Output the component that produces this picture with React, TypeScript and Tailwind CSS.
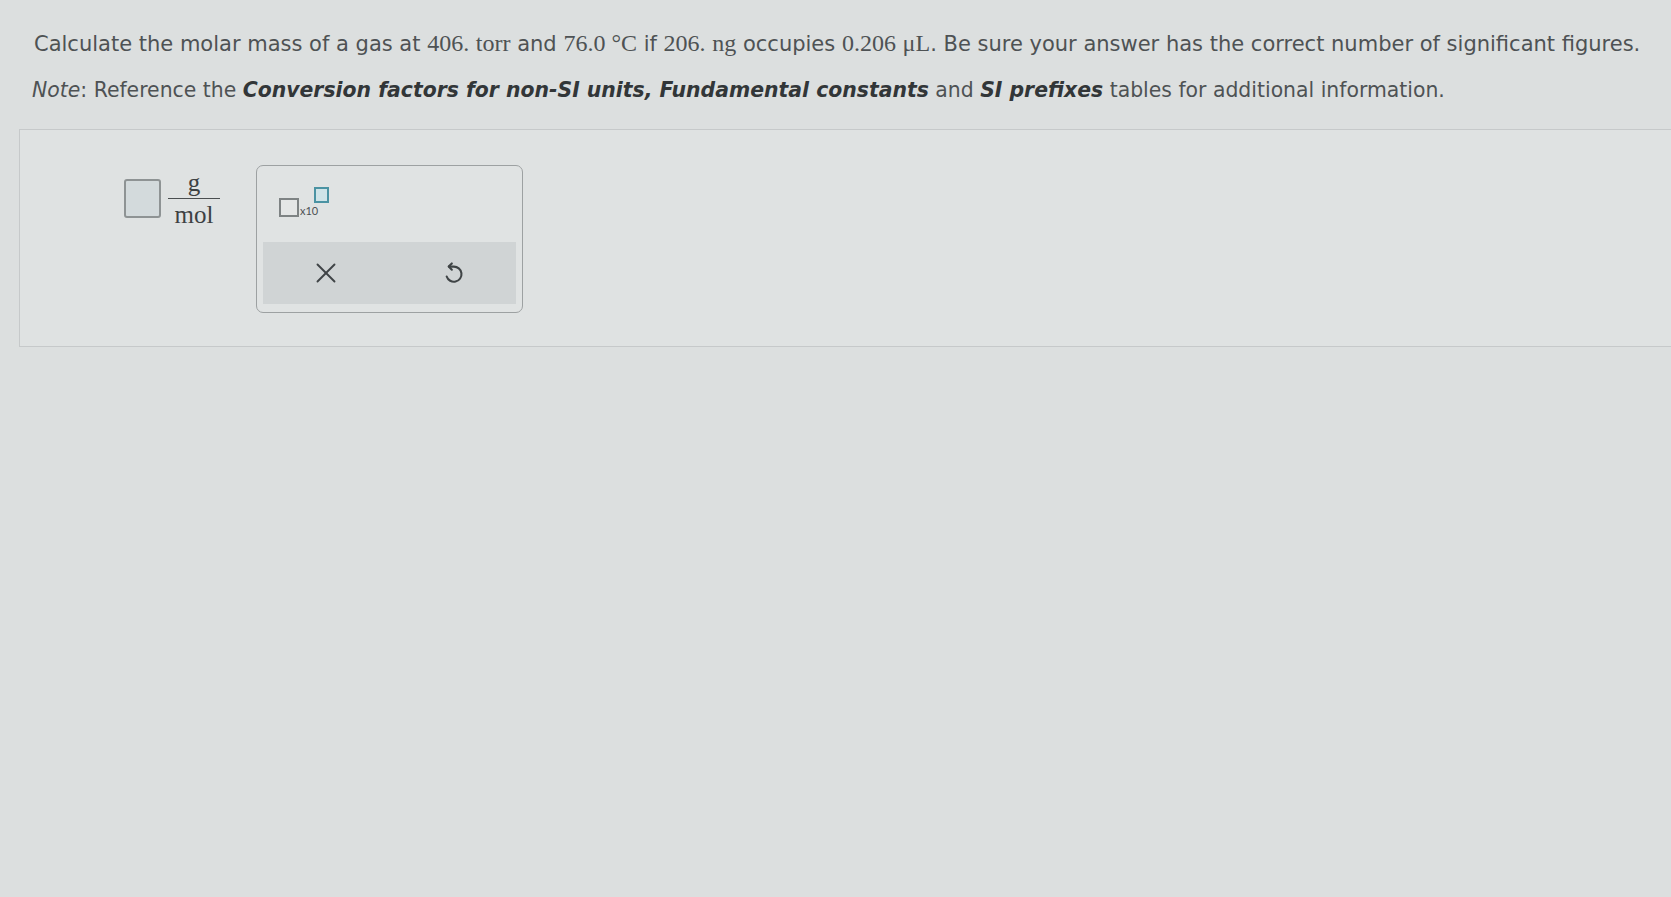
import React from 'react';

const serif = "font-['Liberation_Serif',serif]";

// Undo icon: arrowhead at top-left, open circle turning down to the left
const UndoIcon = () => (
  <svg width="28" height="28" viewBox="0 0 24 24" fill="none" stroke="currentColor" strokeWidth="1.8" strokeLinecap="round" strokeLinejoin="round">
    <path d="M8.5 6.5 H12.5 A6.5 6.5 0 1 1 6.6 15" />
    <path d="M11 3.8 L8.3 6.5 L11 9.2" />
  </svg>
);

const CloseIcon = () => (
  <svg width="24" height="24" viewBox="0 0 24 24" fill="none" stroke="currentColor" strokeWidth="1.9" strokeLinecap="round">
    <path d="M3.5 3.5 L20.5 20.5" />
    <path d="M20.5 3.5 L3.5 20.5" />
  </svg>
);

export default function App() {
  return (
    <div className="min-h-screen w-full bg-[#dcdfdf] text-[#4e5254] font-['DejaVu_Sans',sans-serif]">
      {/* Question */}
      <p className="pl-[34px] pt-[29px] text-[21px] leading-[28px] whitespace-nowrap">
        Calculate the molar mass of a gas at <span className={`${serif} text-[24px]`}>406.</span>{' '}
        <span className={`${serif} text-[24px]`}>torr</span> and{' '}
        <span className={`${serif} text-[24px]`}>76.0 °C</span> if{' '}
        <span className={`${serif} text-[24px]`}>206.</span>{' '}
        <span className={`${serif} text-[24px]`}>ng</span> occupies{' '}
        <span className={`${serif} text-[24px]`}>0.206</span>{' '}
        <span className={`${serif} text-[24px]`}>μL</span>. Be sure your answer has the correct number of significant figures.
      </p>
      <p className="pl-[32px] mt-[18px] text-[20.4px] leading-[28px] whitespace-nowrap">
        <em>Note</em>: Reference the{' '}
        <strong className="italic text-[#323638]">Conversion factors for non-SI units, Fundamental constants</strong> and{' '}
        <strong className="italic text-[#323638]">SI prefixes</strong> tables for additional information.
      </p>

      {/* Answer area */}
      <div className="ml-[19px] mt-[25px] h-[218px] border border-[#c6c9ca] border-r-0 bg-[#dfe2e2] flex items-start pl-[104px] pt-[35px]">
        <div className="mt-[5px] flex items-center gap-[7px]">
          <div className="w-[37px] h-[39px] rounded-[3px] border-2 border-[#8e9394] bg-[#d3dadc]" />
          <div className={`${serif} flex flex-col items-center text-[#3d4143] text-[25px] leading-none w-[52px]`}>
            <span className="pb-[3px]">g</span>
            <span className="w-full border-t-[1.5px] border-[#4a4e50]" />
            <span className="pt-[3px]">mol</span>
          </div>
        </div>

        <div className="ml-[36px] w-[267px] h-[148px] rounded-[7px] border-[1.5px] border-[#9da1a2] bg-[#e0e3e3] flex flex-col">
          <div className="pl-[22px] pt-[21px] h-[76px] flex items-start">
            <div className="relative flex items-end">
              <div className="mt-[11px] w-[20px] h-[19px] border-2 border-[#7e8384] bg-[#e4e6e6]" />
              <span className="ml-[1px] mb-[1px] text-[11px] leading-none text-[#4d5153] font-['Lato',sans-serif]">x10</span>
              <div className="absolute left-[35px] top-0 w-[15px] h-[16px] border-2 border-[#4b93a3] bg-[#cfe4e8]" />
            </div>
          </div>
          <div className="mx-[6px] h-[62px] bg-[#d0d4d5] flex text-[#3f4446]">
            <button className="flex-1 flex items-center justify-center">
              <CloseIcon />
            </button>
            <button className="flex-1 flex items-center justify-center">
              <UndoIcon />
            </button>
          </div>
        </div>
      </div>
    </div>
  );
}
